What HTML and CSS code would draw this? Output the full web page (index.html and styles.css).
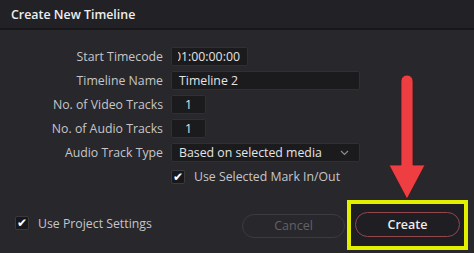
FILE: index.html
```html
<!DOCTYPE html>
<html>
<head>
<meta name="viewport" content="width=device-width, initial-scale=1">
<link rel="stylesheet" href="styles.css">
</head>
<body>
    <div class="dialog">
        <div class="titlebar">Create New Timeline</div>

        <div class="form">
            <div class="label">Start Timecode</div>
            <div class="field tc"><div class="clip"><span class="tcText">01:00:00:00</span></div></div>

            <div class="label">Timeline Name</div>
            <div class="field wide">Timeline 2</div>

            <div class="label">No. of Video Tracks</div>
            <div class="field num">1</div>

            <div class="label">No. of Audio Tracks</div>
            <div class="field num">1</div>

            <div class="label">Audio Track Type</div>
            <div class="field wide select">
                <span>Based on selected media</span>
                <svg class="chevron" width="9" height="6" viewBox="0 0 9 6"><path d="M1 1 L4.5 4.5 L8 1" fill="none" stroke="#8c8c90" stroke-width="1.2"/></svg>
            </div>

            <div class="label"></div>
            <div class="checkRow">
                <span class="check">&#10004;</span>
                <span>Use Selected Mark In/Out</span>
            </div>
        </div>

        <div class="footer">
            <div class="checkRow project">
                <span class="check">&#10004;</span>
                <span>Use Project Settings</span>
            </div>
            <div class="buttons">
                <a href="#" class="btn cancel">Cancel</a>
                <div class="highlight">
                    <a href="#" class="btn create">Create</a>
                </div>
            </div>
        </div>

        <!-- annotation arrow drawn over the dialog -->
        <svg class="arrow" width="40" height="130" viewBox="0 0 40 130">
            <path d="M13 9 a6 6 0 0 1 12 0 L25 93 L37 93 L19 127 L1 93 L13 93 Z" fill="#ef3e42" stroke="#3a1a1c" stroke-width="0.8"/>
        </svg>
    </div>
</body>
</html>
```

FILE: styles.css
```css
html {
    margin: 0px;
    height: 100%;
}

body {
    margin: 0px;
    background: #28272c;
    font-family: "Open Sans", "Noto Sans", sans-serif;
    font-size: 12.3px;
    color: #c6c6c8;
}

.dialog {
    position: relative;
    height: 253px;
    display: flex;
    flex-direction: column;
    overflow: hidden;
}

.titlebar {
    height: 28px;
    background: #222126;
    border-bottom: 2px solid #18181b;
    padding-left: 11px;
    display: flex;
    align-items: center;
    font-size: 12.4px;
    font-weight: 600;
    color: #eeeeee;
}

.form {
    display: grid;
    grid-template-columns: 163px auto;
    grid-auto-rows: 19px;
    column-gap: 8px;
    row-gap: 5px;
    padding-top: 17px;
}

.label {
    text-align: right;
    line-height: 19px;
    white-space: nowrap;
}

.field {
    box-sizing: border-box;
    height: 19px;
    background: #1b1b1d;
    border: 1px solid #303034;
    border-radius: 2px;
    color: #e4e4e4;
    line-height: 17px;
    padding-left: 7px;
}

.tc {
    width: 77px;
    padding-left: 6px;
}

.clip {
    overflow: hidden;
    white-space: nowrap;
}

.tcText {
    display: inline-block;
    margin-left: -4px;
}

.wide {
    width: 189px;
}

.num {
    width: 35px;
    padding-left: 0px;
    text-align: center;
}

.select {
    display: flex;
    align-items: center;
    justify-content: space-between;
    padding-right: 10px;
}

.checkRow {
    display: flex;
    align-items: center;
    gap: 9px;
    line-height: 19px;
}

.check {
    box-sizing: border-box;
    width: 14px;
    height: 14px;
    background: #18181a;
    border: 1px solid #3a3a3e;
    border-radius: 2px;
    color: #ffffff;
    font-family: "DejaVu Sans", sans-serif;
    font-size: 12px;
    line-height: 12px;
    text-align: center;
}

.footer {
    display: flex;
    justify-content: space-between;
    align-items: center;
    margin-top: 14px;
    padding: 0px 6px 0px 15px;
}

.project {
    padding-bottom: 4px;
}

.buttons {
    display: flex;
    align-items: center;
    gap: 2px;
}

.btn {
    box-sizing: border-box;
    display: inline-block;
    border-radius: 13px;
    text-align: center;
    text-decoration: none;
    font-size: 12.5px;
}

.cancel {
    width: 103px;
    height: 24px;
    line-height: 22px;
    border: 1px solid #3c3c40;
    color: #626266;
    margin-top: 2px;
}

.highlight {
    box-sizing: border-box;
    height: 50px;
    border: 4px solid #e2f000;
    padding: 8px 4px 0px 4px;
    background: #1f1e23;
}

.create {
    width: 105px;
    height: 25px;
    line-height: 23px;
    border: 1px solid #93464c;
    color: #ededed;
    font-weight: 600;
}

.arrow {
    position: absolute;
    left: 388px;
    top: 72px;
}
```
